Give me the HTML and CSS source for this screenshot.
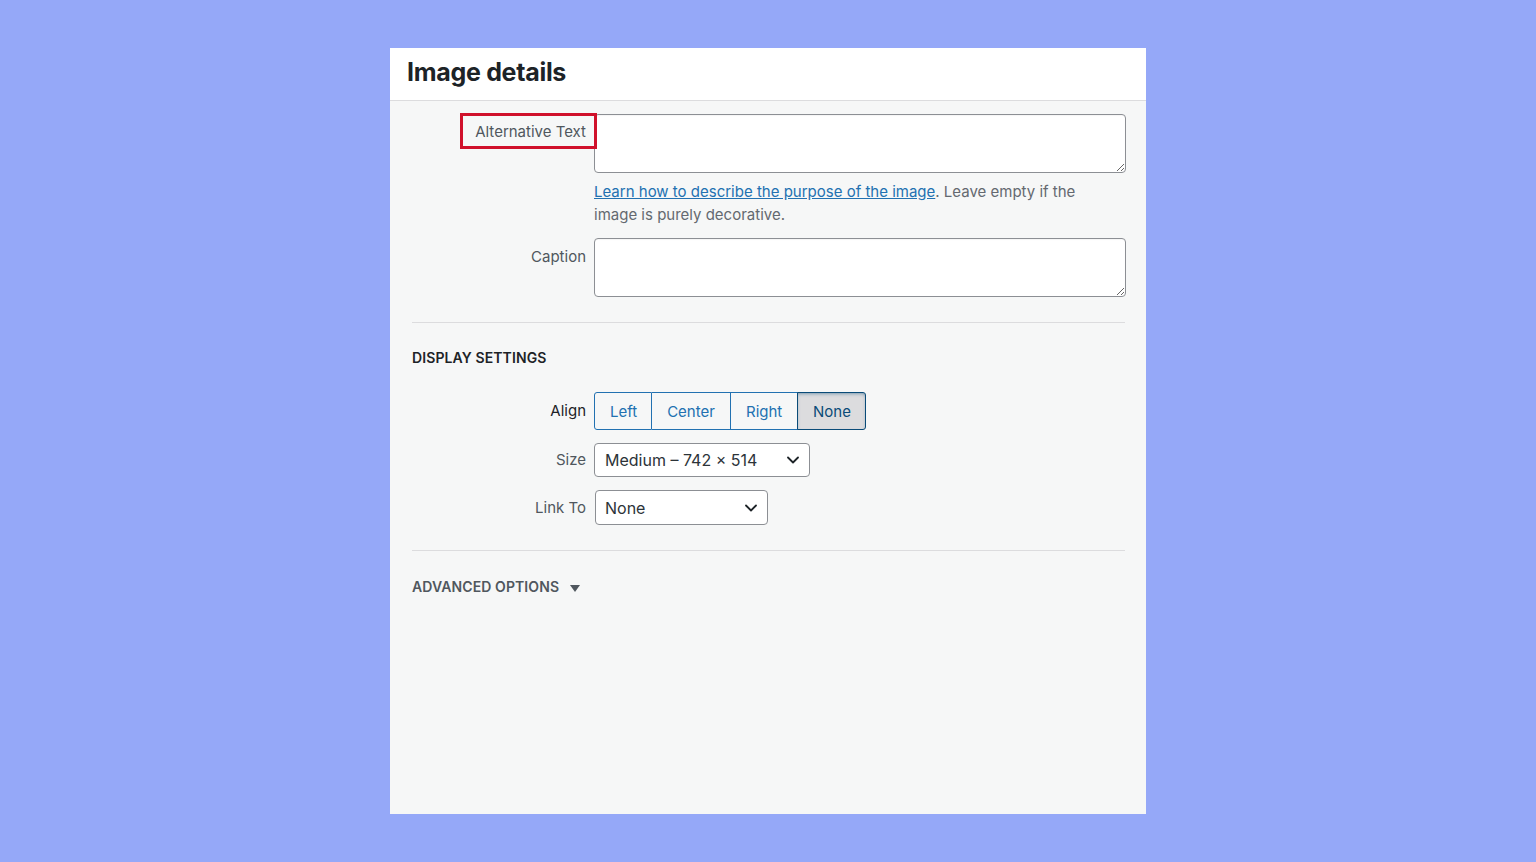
FILE: index.html
```html
<!DOCTYPE html>
<html lang="en">
<head>
<meta charset="utf-8">
<title>Image details</title>
<link rel="stylesheet" href="styles.css">
</head>
<body>
<div class="panel">
  <div class="header"><h1 class="title">Image details</h1></div>
  <div class="content">
    <div class="row row-top">
      <label class="label"><span class="mark">Alternative Text</span></label>
      <textarea class="field"></textarea>
    </div>
    <p class="help"><a href="#" class="link">Learn how to describe the purpose of the image</a>. Leave empty if the image is purely decorative.</p>
    <div class="row row-top row-caption">
      <label class="label">Caption</label>
      <textarea class="field"></textarea>
    </div>
    <hr class="divider">
    <h2 class="section">Display Settings</h2>
    <div class="row row-mid">
      <span class="label label-dark">Align</span>
      <div class="btn-group">
        <button class="btn">Left</button>
        <button class="btn">Center</button>
        <button class="btn">Right</button>
        <button class="btn btn-pressed">None</button>
      </div>
    </div>
    <div class="row row-mid row-gap">
      <span class="label">Size</span>
      <div class="select select-size"><span>Medium – 742 × 514</span>
        <svg class="chev" viewBox="0 0 12 8" width="12" height="8"><path d="M1 1.5 L6 6.5 L11 1.5" fill="none" stroke="#1d2327" stroke-width="1.8" stroke-linecap="round" stroke-linejoin="round"/></svg>
      </div>
    </div>
    <div class="row row-mid row-gap">
      <span class="label">Link To</span>
      <div class="select select-link"><span>None</span>
        <svg class="chev" viewBox="0 0 12 8" width="12" height="8"><path d="M1 1.5 L6 6.5 L11 1.5" fill="none" stroke="#1d2327" stroke-width="1.8" stroke-linecap="round" stroke-linejoin="round"/></svg>
      </div>
    </div>
    <hr class="divider divider-2">
    <h2 class="section section-adv">Advanced Options <span class="tri"></span></h2>
  </div>
</div>
</body>
</html>
```

FILE: styles.css
```css
* { box-sizing: border-box; }
html, body { margin: 0; padding: 0; }
body {
  min-height: 100vh;
  background: #95a8f8;
  display: flex;
  align-items: center;
  justify-content: center;
  font-family: Inter, "Liberation Sans", Arial, sans-serif;
  color: #1d2327;
}
.panel {
  width: 756px;
  height: 766px;
  background: #f6f7f7;
  display: flex;
  flex-direction: column;
}
.header {
  height: 53px;
  background: #fff;
  border-bottom: 1px solid #dcdcde;
  padding-left: 17px;
  display: flex;
  align-items: center;
}
.title {
  margin: 0;
  font-size: 25px;
  font-weight: 700;
  letter-spacing: -0.3px;
  color: #1d2327;
  line-height: 1;
  padding-bottom: 4px;
}
.content {
  padding: 13px 20px 0 22px;
}
.row { display: flex; gap: 8px; }
.row-top { align-items: flex-start; }
.row-mid { align-items: center; }
.row-caption { margin-top: 12px; }
.row-gap { margin-top: 13px; }
.label {
  width: 174px;
  flex: none;
  text-align: right;
  font-size: 15px;
  line-height: 20px;
  color: #50575e;
}
.row-top .label { padding-top: 8px; }
.row-caption .label { padding-top: 9px; }
.label-dark { color: #1d2327; }
.mark { position: relative; }
.mark::after {
  content: "";
  position: absolute;
  left: -15px;
  right: -11px;
  top: -9px;
  bottom: -8px;
  border: 3px solid #d0112b;
}
.field {
  flex: 1;
  height: 59px;
  border: 1px solid #8c8f94;
  border-radius: 4px;
  background: #fff;
  margin: 0;
  font-family: inherit;
  box-shadow: inset 0 1px 1px rgba(0,0,0,0.04);
}
.help {
  margin: 7px 0 0 182px;
  font-size: 15px;
  line-height: 23px;
  color: #646970;
  padding-right: 40px;
}
.link { color: #2271b1; text-decoration: underline; }
.divider {
  border: 0;
  border-top: 1px solid #dcdcde;
  margin: 25px 1px 0 0;
}
.section {
  margin: 26px 0 0 0;
  font-size: 14px;
  font-weight: 600;
  text-transform: uppercase;
  letter-spacing: 0.1px;
  line-height: 18px;
  color: #1d2327;
}
.section + .row { margin-top: 25px; }
.btn-group { display: flex; }
.btn {
  height: 38px;
  margin: 0;
  padding: 0 15px;
  background: #f6f7f7;
  border: 1px solid #2271b1;
  border-left-width: 0;
  color: #2271b1;
  font-family: inherit;
  font-size: 15px;
  line-height: 1;
}
.btn:first-child { border-left-width: 1px; border-radius: 3px 0 0 3px; }
.btn:last-child { border-radius: 0 3px 3px 0; }
.btn:nth-child(2) { width: 79px; }
.btn:nth-child(3) { width: 67px; }
.btn:first-child { width: 58px; }
.btn-pressed {
  width: 69px;
  background: #dcdcde;
  border-color: #0a4b78;
  border-left-width: 1px;
  margin-left: -1px;
  color: #0a4b78;
  box-shadow: inset 0 2px 5px -3px #0a4b78;
}
.select {
  height: 34px;
  background: #fff;
  border: 1px solid #8c8f94;
  border-radius: 4px;
  display: flex;
  align-items: center;
  justify-content: space-between;
  padding: 0 10px 0 10px;
  font-size: 16px;
  color: #2c3338;
}
.select-size { width: 216px; }
.select-link { width: 173px; height: 35px; margin-left: 1px; padding-left: 9px; }
.chev { display: block; }
.divider-2 { margin-top: 25px; }
.section-adv {
  margin-top: 27px;
  color: #50575e;
  display: flex;
  align-items: center;
}
.tri {
  display: inline-block;
  width: 0; height: 0;
  border-left: 5px solid transparent;
  border-right: 5px solid transparent;
  border-top: 7px solid #50575e;
  margin-left: 11px;
  margin-top: 3px;
}
```
